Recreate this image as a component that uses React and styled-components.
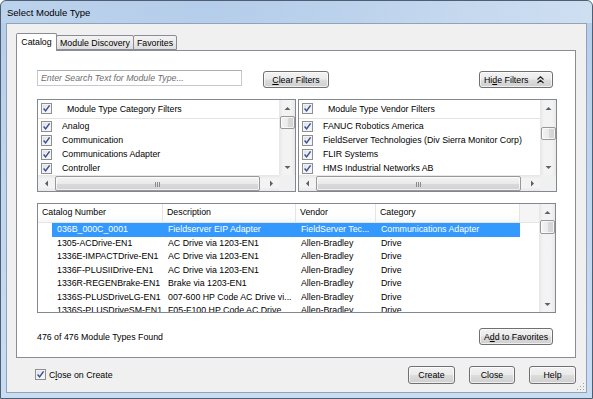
import React from "react";
import styled, { createGlobalStyle } from "styled-components";

const GlobalStyle = createGlobalStyle`
  html, body {
    margin: 0;
    padding: 0;
  }
  body {
    width: 593px;
    height: 399px;
    overflow: hidden;
    background: #fff;
    font-family: "Liberation Sans", Arial, sans-serif;
    font-size: 8.8px;
    color: #000;
  }
  * {
    box-sizing: border-box;
  }
`;

const Window = styled.div`
  width: 593px;
  height: 399px;
  border: 1px solid #4f5f73;
  border-radius: 6px 6px 0 0;
  background: linear-gradient(180deg, #b4cdea 0%, #c0d6ef 45%, #c9ddf2 100%);
  display: flex;
  flex-direction: column;
  padding: 0 5px 5px;
`;

const TitleBar = styled.div`
  height: 22px;
  margin: 0 -5px;
  padding-left: 6px;
  display: flex;
  align-items: center;
  font-size: 9.5px;
  border-radius: 5px 5px 0 0;
  background: linear-gradient(
    90deg,
    rgba(255, 255, 255, 0.1) 0%,
    rgba(255, 255, 255, 0) 35%,
    rgba(255, 255, 255, 0.08) 55%,
    rgba(255, 255, 255, 0.35) 100%
  );
`;

const Client = styled.div`
  flex: 1;
  position: relative;
  background: #f0f0f0;
  border: 1px solid #8fa3ba;
  display: flex;
  flex-direction: column;
  padding: 9px 10px 0 9px;
`;

const TabStrip = styled.div`
  height: 17px;
  display: flex;
  align-items: flex-end;
  position: relative;
  z-index: 1;
`;

const Tab = styled.div`
  width: ${(p) => p.$w}px;
  height: ${(p) => (p.$active ? 18 : 15)}px;
  margin-bottom: ${(p) => (p.$active ? -1 : 0)}px;
  margin-left: ${(p) => (p.$first ? 0 : -1)}px;
  border: 1px solid #898c95;
  border-bottom: ${(p) => (p.$active ? "none" : "1px solid #898c95")};
  border-radius: 2px 2px 0 0;
  background: ${(p) =>
    p.$active ? "#fff" : "linear-gradient(180deg, #f3f3f3 0%, #ebebeb 50%, #dddddd 100%)"};
  display: flex;
  align-items: center;
  justify-content: center;
  padding-bottom: ${(p) => (p.$active ? 2 : 0)}px;
`;

const TabPanel = styled.div`
  height: 308px;
  flex: none;
  background: #fff;
  border: 1px solid #898c95;
  display: flex;
  flex-direction: column;
  padding: 19px 18px 0 20px;
`;

const SearchRow = styled.div`
  height: 18px;
  display: flex;
  align-items: flex-end;
`;

const SearchInput = styled.input`
  width: 205px;
  height: 16px;
  align-self: flex-start;
  border: 1px solid #c5c9d1;
  border-top-color: #abadb3;
  padding: 0 3px;
  font: inherit;
  font-size: 8.8px;
  outline: none;
  &::placeholder {
    color: #6d6d6d;
    font-style: italic;
  }
`;

const Button = styled.button`
  width: ${(p) => p.$w}px;
  height: ${(p) => p.$h || 17}px;
  margin-left: ${(p) => p.$ml || 0}px;
  flex: none;
  font: inherit;
  font-size: 8.8px;
  color: #000;
  border: 1px solid #707070;
  border-radius: 3px;
  background: linear-gradient(180deg, #f2f2f2 0%, #ebebeb 48%, #dddddd 52%, #cfcfcf 100%);
  box-shadow: inset 0 0 0 1px rgba(255, 255, 255, 0.65);
  display: flex;
  align-items: center;
  justify-content: ${(p) => (p.$spread ? "space-between" : "center")};
  padding: ${(p) => (p.$spread ? "0 8px 0 4px" : "0")};
`;

const U = styled.span`
  text-decoration: underline;
`;

const FiltersRow = styled.div`
  margin-top: 11px;
  display: flex;
  gap: 2px;
`;

const FilterPanel = styled.div`
  width: 259px;
  height: 93px;
  border: 1px solid #828790;
  background: #fff;
  display: grid;
  grid-template-columns: 1fr 16px;
  grid-template-rows: 1fr 16px;
`;

const FilterList = styled.div`
  overflow: hidden;
  display: flex;
  flex-direction: column;
`;

const FilterHeader = styled.div`
  height: 19px;
  flex: none;
  display: flex;
  align-items: flex-start;
  padding-left: 3px;
  border-bottom: 1px solid #e3e3e3;
  line-height: 19px;
  white-space: nowrap;
  & > span:first-child {
    margin-top: 3px;
  }
`;

const HeaderLabel = styled.span`
  margin-left: 15px;
`;

const FilterRow = styled.div`
  height: 14px;
  flex: none;
  display: flex;
  align-items: center;
  gap: 10px;
  padding-left: 3px;
  white-space: nowrap;
`;

const CheckBox = styled.span`
  width: 11px;
  height: 11px;
  flex: none;
  border: 1px solid #8e8f8f;
  background: linear-gradient(135deg, #d8dbe0 0%, #eef0f2 50%, #fbfbfb 100%);
  box-shadow: inset 0 0 0 1px #f3f3f3;
  display: inline-flex;
  align-items: center;
  justify-content: center;
`;

const Check = () => (
  <CheckBox>
    <svg width="9" height="9" viewBox="0 0 9 9">
      <path d="M1.6 4.6 L3.6 6.9 L7.6 1.4" fill="none" stroke="#3a4f94" strokeWidth="1.5" />
    </svg>
  </CheckBox>
);

const VBar = styled.div`
  width: 16px;
  display: flex;
  flex-direction: column;
  background: linear-gradient(90deg, #e6e6e6 0%, #f3f3f3 25%, #f3f3f3 75%, #e8e8e8 100%);
`;

const HBar = styled.div`
  height: 16px;
  display: flex;
  background: linear-gradient(180deg, #e6e6e6 0%, #f3f3f3 25%, #f3f3f3 75%, #e8e8e8 100%);
`;

const ArrowBtn = styled.div`
  width: 16px;
  height: 16px;
  flex: none;
  display: flex;
  align-items: center;
  justify-content: center;
`;

const VTrack = styled.div`
  flex: 1;
  display: flex;
  flex-direction: column;
  align-items: center;
  padding-top: ${(p) => p.$offset}px;
`;

const HTrack = styled.div`
  flex: 1;
  display: flex;
  align-items: center;
  padding-left: ${(p) => p.$offset}px;
`;

const Thumb = styled.div`
  width: ${(p) => (p.$vertical ? "15px" : `${p.$size}px`)};
  height: ${(p) => (p.$vertical ? `${p.$size}px` : "15px")};
  flex: none;
  border: 1px solid #989898;
  border-radius: 2px;
  background: ${(p) =>
    p.$vertical
      ? "linear-gradient(90deg, #f4f4f4 0%, #eaeaea 50%, #dadada 51%, #d2d2d2 100%)"
      : "linear-gradient(180deg, #f4f4f4 0%, #eaeaea 50%, #dadada 51%, #d2d2d2 100%)"};
  box-shadow: inset 0 0 0 1px rgba(255, 255, 255, 0.7);
  display: flex;
  align-items: center;
  justify-content: center;
`;

const Corner = styled.div`
  background: #f0f0f0;
`;

const Arrow = ({ dir }) => {
  const paths = {
    up: "M0.5 4 L3.5 1 L6.5 4 Z",
    down: "M0.5 1 L3.5 4 L6.5 1 Z",
    left: "M4 0.5 L1 3.5 L4 6.5 Z",
    right: "M1 0.5 L4 3.5 L1 6.5 Z",
  };
  const vertical = dir === "up" || dir === "down";
  return (
    <svg width={vertical ? 7 : 5} height={vertical ? 5 : 7} viewBox={vertical ? "0 0 7 5" : "0 0 5 7"}>
      <path d={paths[dir]} fill="#606060" />
    </svg>
  );
};

const Grip = () => (
  <svg width="7" height="7" viewBox="0 0 7 7">
    <rect x="1" y="2" width="1" height="5" fill="#8a8a8a" />
    <rect x="3" y="2" width="1" height="5" fill="#8a8a8a" />
    <rect x="5" y="2" width="1" height="5" fill="#8a8a8a" />
  </svg>
);

const VScroll = ({ offset, size }) => (
  <VBar>
    <ArrowBtn>
      <Arrow dir="up" />
    </ArrowBtn>
    <VTrack $offset={offset}>
      <Thumb $vertical $size={size} />
    </VTrack>
    <ArrowBtn>
      <Arrow dir="down" />
    </ArrowBtn>
  </VBar>
);

const HScroll = ({ offset, size }) => (
  <HBar>
    <ArrowBtn>
      <Arrow dir="left" />
    </ArrowBtn>
    <HTrack $offset={offset}>
      <Thumb $size={size}>
        <Grip />
      </Thumb>
    </HTrack>
    <ArrowBtn>
      <Arrow dir="right" />
    </ArrowBtn>
  </HBar>
);

const Filter = ({ title, items, thumb }) => (
  <FilterPanel>
    <FilterList>
      <FilterHeader>
        <Check />
        <HeaderLabel>{title}</HeaderLabel>
      </FilterHeader>
      {items.map((it) => (
        <FilterRow key={it}>
          <Check />
          <span>{it}</span>
        </FilterRow>
      ))}
    </FilterList>
    <VScroll offset={thumb} size={13} />
    <HScroll offset={1} size={205} />
    <Corner />
  </FilterPanel>
);

const Table = styled.div`
  width: 519px;
  height: 110px;
  margin-top: 11px;
  border: 1px solid #828790;
  background: #fff;
  display: flex;
`;

const TableBody = styled.div`
  flex: 1;
  overflow: hidden;
  display: flex;
  flex-direction: column;
`;

const HeaderRow = styled.div`
  height: 19px;
  flex: none;
  display: flex;
  border-bottom: 1px solid #e5e5e5;
  background: linear-gradient(180deg, #ffffff 0%, #ffffff 60%, #f6f7f8 100%);
`;

const HeaderCell = styled.div`
  width: ${(p) => p.$w}px;
  flex: none;
  padding-left: 4px;
  line-height: 17px;
  border-right: 1px solid #e5e5e5;
  white-space: nowrap;
`;

const HeaderFill = styled.div`
  flex: 1;
  background: #f5f5f5;
`;

const Row = styled.div`
  height: 13.5px;
  flex: none;
  display: flex;
  padding-left: 14px;
`;

const RowCells = styled.div`
  display: flex;
  background: ${(p) => (p.$selected ? "#3399ff" : "transparent")};
  color: ${(p) => (p.$selected ? "#fff" : "#000")};
`;

const Cell = styled.div`
  width: ${(p) => p.$w}px;
  flex: none;
  padding-left: 5px;
  line-height: 13.5px;
  white-space: nowrap;
  overflow: hidden;
`;

const StatusRow = styled.div`
  height: 17px;
  margin-top: 15px;
  display: flex;
  align-items: center;
  justify-content: space-between;
  padding-right: 4px;
`;

const Footer = styled.div`
  height: 33px;
  display: flex;
  align-items: center;
  padding-left: 19px;
`;

const CheckLabel = styled.span`
  margin-left: 3px;
`;

const FooterButtons = styled.div`
  margin-left: auto;
  display: flex;
  gap: 14px;
`;

const ResizeGrip = styled.div`
  position: absolute;
  right: 1px;
  bottom: 1px;
  width: 10px;
  height: 10px;
`;

const categories = ["Analog", "Communication", "Communications Adapter", "Controller"];
const vendors = [
  "FANUC Robotics America",
  "FieldServer Technologies (Div Sierra Monitor Corp)",
  "FLIR Systems",
  "HMS Industrial Networks AB",
];

const columns = [111, 133, 80, 144];

const rows = [
  ["036B_000C_0001", "Fieldserver EIP Adapter", "FieldServer Tec...", "Communications Adapter"],
  ["1305-ACDrive-EN1", "AC Drive via 1203-EN1", "Allen-Bradley", "Drive"],
  ["1336E-IMPACTDrive-EN1", "AC Drive via 1203-EN1", "Allen-Bradley", "Drive"],
  ["1336F-PLUSIIDrive-EN1", "AC Drive via 1203-EN1", "Allen-Bradley", "Drive"],
  ["1336R-REGENBrake-EN1", "Brake via 1203-EN1", "Allen-Bradley", "Drive"],
  ["1336S-PLUSDriveLG-EN1", "007-600 HP Code AC Drive vi...", "Allen-Bradley", "Drive"],
  ["1336S-PLUSDriveSM-EN1", "F05-F100 HP Code AC Drive ...", "Allen-Bradley", "Drive"],
];

const DoubleUp = () => (
  <svg width="7" height="8" viewBox="0 0 7 8">
    <path d="M0.5 3.5 L3.5 0.8 L6.5 3.5 M0.5 7 L3.5 4.3 L6.5 7" fill="none" stroke="#222" strokeWidth="1.2" />
  </svg>
);

export default function App() {
  return (
    <>
      <GlobalStyle />
      <Window>
        <TitleBar>Select Module Type</TitleBar>
        <Client>
          <TabStrip>
            <Tab $active $first $w={41}>Catalog</Tab>
            <Tab $w={78}>Module Discovery</Tab>
            <Tab $w={44}>Favorites</Tab>
          </TabStrip>
          <TabPanel>
            <SearchRow>
              <SearchInput placeholder="Enter Search Text for Module Type..." />
              <Button $w={66} $ml={21}>
                <span>
                  <U>C</U>lear Filters
                </span>
              </Button>
              <Button $w={74} $ml={150} $spread>
                <span>
                  Hi<U>d</U>e Filters
                </span>
                <DoubleUp />
              </Button>
            </SearchRow>
            <FiltersRow>
              <Filter title="Module Type Category Filters" items={categories} thumb={0} />
              <Filter title="Module Type Vendor Filters" items={vendors} thumb={11} />
            </FiltersRow>
            <Table>
              <TableBody>
                <HeaderRow>
                  <HeaderCell $w={125}>Catalog Number</HeaderCell>
                  <HeaderCell $w={133}>Description</HeaderCell>
                  <HeaderCell $w={80}>Vendor</HeaderCell>
                  <HeaderCell $w={144}>Category</HeaderCell>
                  <HeaderFill />
                </HeaderRow>
                {rows.map((r, i) => (
                  <Row key={r[0]}>
                    <RowCells $selected={i === 0}>
                      {r.map((c, j) => (
                        <Cell key={j} $w={columns[j]}>
                          {c}
                        </Cell>
                      ))}
                    </RowCells>
                  </Row>
                ))}
              </TableBody>
              <VScroll offset={0} size={14} />
            </Table>
            <StatusRow>
              <span>476 of 476 Module Types Found</span>
              <Button $w={74}>
                <span>
                  A<U>d</U>d to Favorites
                </span>
              </Button>
            </StatusRow>
          </TabPanel>
          <Footer>
            <Check />
            <CheckLabel>
              C<U>l</U>ose on Create
            </CheckLabel>
            <FooterButtons>
              <Button $w={47} $h={18}>Create</Button>
              <Button $w={46} $h={18}>Close</Button>
              <Button $w={47} $h={18}>Help</Button>
            </FooterButtons>
          </Footer>
          <ResizeGrip>
            <svg width="10" height="10" viewBox="0 0 10 10">
              {[
                [8, 2],
                [8, 5],
                [5, 5],
                [8, 8],
                [5, 8],
                [2, 8],
              ].map(([x, y]) => (
                <rect key={`${x}-${y}`} x={x} y={y} width="1" height="1" fill="#a0a0a0" />
              ))}
            </svg>
          </ResizeGrip>
        </Client>
      </Window>
    </>
  );
}
